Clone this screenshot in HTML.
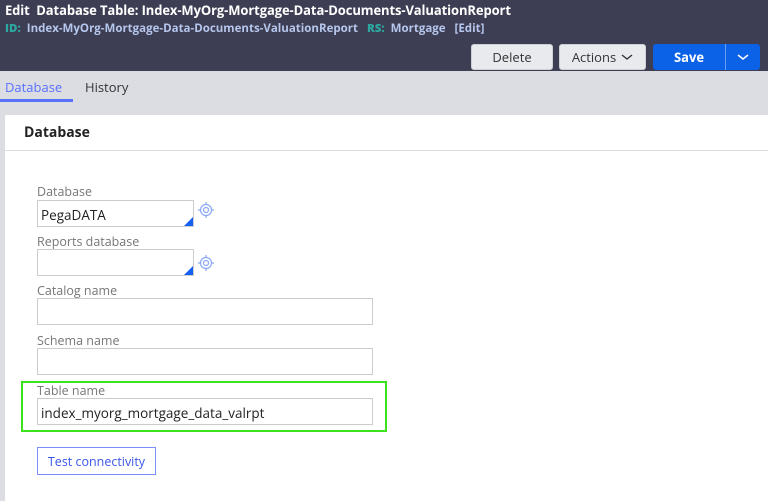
<!DOCTYPE html>
<html><head><style>
*{box-sizing:border-box;margin:0;padding:0}
body{width:768px;height:501px;overflow:hidden;background:#dcdde2;font-family:"Open Sans","Liberation Sans",sans-serif;position:relative}
.hdr{position:absolute;left:0;top:0;width:768px;height:71px;background:#3d3e53}
.t{position:absolute;left:5px;top:1px;color:#fff;font-weight:bold;font-size:13px;letter-spacing:-0.1px}
.id{position:absolute;left:5px;top:21px;font-size:11.5px;font-weight:bold;color:#b6c6ec;white-space:pre}
.id b{color:#2da8a1}
.btn{position:absolute;top:44px;height:26px;border-radius:3px;font-size:13px;display:flex;align-items:center;justify-content:center}
.g{background:#e9eaee;color:#333;border:1px solid #cfd0d6}
.abs{position:absolute}
.lbl{position:absolute;left:37px;font-size:12.5px;color:#777}
.inp{position:absolute;left:37px;height:27px;border:1px solid #ccc;background:#fff;font-size:13.5px;color:#222;padding:5px 3px}
.tri{position:absolute;right:0;bottom:0;width:0;height:0;border-left:9px solid transparent;border-bottom:9px solid #1560f0}
</style></head><body>
<div class="hdr">
<div class="t">Edit&nbsp; Database Table: Index-MyOrg-Mortgage-Data-Documents-ValuationReport</div>
<div class="id"><b>ID:</b>  Index-MyOrg-Mortgage-Data-Documents-ValuationReport   <b>RS:</b>  Mortgage   [Edit]</div>
<div class="btn g" style="left:471px;width:82px">Delete</div>
<div class="btn g" style="left:559px;width:87px">Actions <svg width="12" height="8" style="margin-left:5px"><path d="M1 2l5 4 5-4" stroke="#333" stroke-width="1.4" fill="none"/></svg></div>
<div class="btn" style="left:653px;width:107px;background:#0b62e6;color:#fff;font-weight:bold;justify-content:flex-start"><span style="width:72px;text-align:center">Save</span><span style="width:1px;height:26px;background:#6a9ef0"></span><svg width="34" height="10"><path d="M12 3l5 4 5-4" stroke="#fff" stroke-width="1.5" fill="none"/></svg></div>
</div>
<div class="abs" style="left:5px;top:78px;font-size:13px;color:#5670ff">Database</div>
<div class="abs" style="left:0;top:99px;width:73px;height:3px;background:#5670ff"></div>
<div class="abs" style="left:85px;top:78px;font-size:13px;color:#333">History</div>
<div class="abs" style="left:5px;top:115px;width:763px;height:386px;background:#fff"></div>
<div class="abs" style="left:24px;top:123px;font-size:14px;font-weight:bold;color:#222">Database</div>
<div class="abs" style="left:5px;top:150px;width:763px;height:1px;background:#ddd"></div>
<div class="lbl" style="top:183px">Database</div>
<div class="inp" style="top:200px;width:157px">PegaDATA<div class="tri"></div></div>
<svg class="abs" style="left:197px;top:201px" width="18" height="18"><circle cx="9" cy="9" r="5.5" fill="none" stroke="#8aa8f5" stroke-width="1.2"/><circle cx="9" cy="9" r="2.5" fill="none" stroke="#8aa8f5" stroke-width="1.2"/><path d="M9 1v3M9 14v3M1 9h3M14 9h3" stroke="#8aa8f5" stroke-width="1.2"/></svg>
<div class="lbl" style="top:233px">Reports database</div>
<div class="inp" style="top:249px;width:157px"><div class="tri"></div></div>
<svg class="abs" style="left:197px;top:254px" width="18" height="18"><circle cx="9" cy="9" r="5.5" fill="none" stroke="#8aa8f5" stroke-width="1.2"/><circle cx="9" cy="9" r="2.5" fill="none" stroke="#8aa8f5" stroke-width="1.2"/><path d="M9 1v3M9 14v3M1 9h3M14 9h3" stroke="#8aa8f5" stroke-width="1.2"/></svg>
<div class="lbl" style="top:282px">Catalog name</div>
<div class="inp" style="top:298px;width:336px"></div>
<div class="lbl" style="top:332px">Schema name</div>
<div class="inp" style="top:348px;width:336px"></div>
<div class="abs" style="left:21px;top:381px;width:366px;height:51px;border:2px solid #3de21e"></div>
<div class="lbl" style="top:382px">Table name</div>
<div class="inp" style="top:398px;width:336px">index_myorg_mortgage_data_valrpt</div>
<div class="abs" style="left:37px;top:447px;width:119px;height:28px;border:1px solid #7a8ff8;color:#3a56e8;font-size:12.5px;display:flex;align-items:center;justify-content:center">Test connectivity</div>
</body></html>
